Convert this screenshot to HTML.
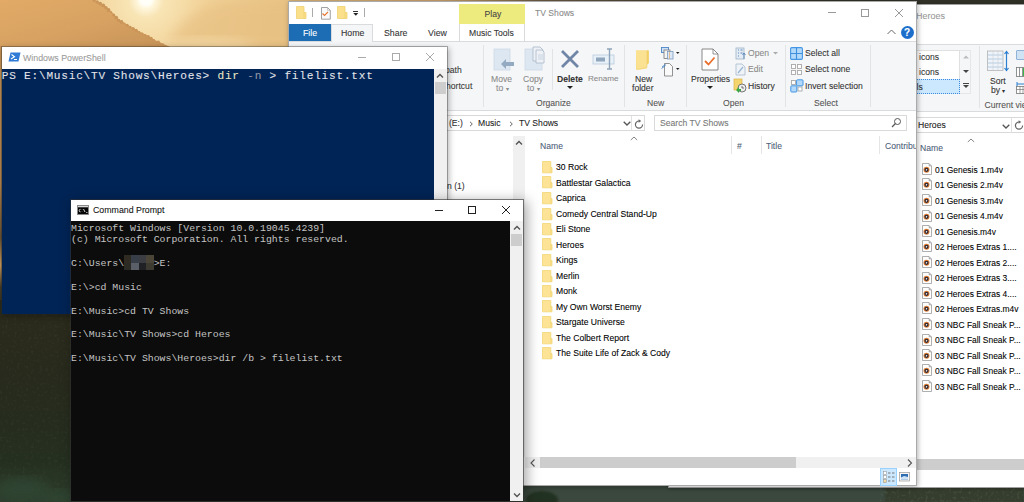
<!DOCTYPE html>
<html><head><meta charset="utf-8">
<style>
*{margin:0;padding:0;box-sizing:border-box}
html,body{width:1024px;height:502px;overflow:hidden;position:relative;background:#2f3a2a;font-family:"Liberation Sans",sans-serif}
.a{position:absolute}
.t{position:absolute;white-space:nowrap;font-size:8.6px;line-height:10px;color:#000;-webkit-text-stroke:0.08px currentColor}
.g{color:#8a8a8a}
.mono{font-family:"Liberation Mono",monospace}
</style></head><body>

<!-- ===== wallpaper ===== -->
<svg class="a" style="left:0;top:0" width="1024" height="502">
  <defs>
    <radialGradient id="sun" cx="146" cy="0" r="150" gradientUnits="userSpaceOnUse"><stop offset="0" stop-color="#fffef2"/><stop offset="0.05" stop-color="#fff8e0"/><stop offset="0.12" stop-color="#f8e4b4"/><stop offset="0.4" stop-color="#f2d298"/><stop offset="1" stop-color="#e8c386"/></radialGradient>
    <linearGradient id="hill" x1="0" y1="0" x2="1" y2="1"><stop offset="0" stop-color="#e2aa66"/><stop offset="0.5" stop-color="#d7a262"/><stop offset="1" stop-color="#c69257"/></linearGradient>
    <linearGradient id="forest" x1="0" y1="0" x2="0" y2="1"><stop offset="0" stop-color="#2c2b1c"/><stop offset="0.4" stop-color="#272a1c"/><stop offset="0.8" stop-color="#252f20"/><stop offset="1" stop-color="#2d3d2c"/></linearGradient>
    <filter id="bl"><feGaussianBlur stdDeviation="6"/></filter>
    <filter id="bl2"><feGaussianBlur stdDeviation="1"/></filter>
    <filter id="noise" x="0" y="0" width="100%" height="100%"><feTurbulence type="fractalNoise" baseFrequency="0.35" numOctaves="2" seed="4"/><feColorMatrix type="matrix" values="0 0 0 0 0.35  0 0 0 0 0.45  0 0 0 0 0.3  0 0 0 1.6 -0.85"/></filter>
  </defs>
  <rect x="0" y="0" width="1024" height="200" fill="url(#sun)"/>
  <path d="M165 50 C175 25 195 8 225 2 C250 0 270 0 300 0 L300 50 Z" fill="#e6be80" opacity="0.6" filter="url(#bl)"/>
  <path d="M130 50 C160 38 200 34 240 40 L260 50 Z" fill="#f3dcaa" opacity="0.6" filter="url(#bl)"/>
  <circle cx="146" cy="-1" r="7.5" fill="#fffef8" filter="url(#bl2)"/>
  <path d="M0 0 H95 L104 5 L112 12 L119.5 20 L128 25 L137 30 L146 35 L154.7 40 L168 46 L172 48 L0 48 Z" fill="url(#hill)"/>
  <g><circle cx="94.2" cy="0.3" r="1.6" fill="#c99558"/><circle cx="97.2" cy="2.0" r="1.7" fill="#c99558"/><circle cx="100.2" cy="3.6" r="1.8" fill="#c99558"/><circle cx="103.2" cy="5.3" r="1.9" fill="#c99558"/><circle cx="105.9" cy="7.6" r="1.7" fill="#c99558"/><circle cx="108.5" cy="10.0" r="1.9" fill="#c99558"/><circle cx="111.2" cy="12.3" r="1.0" fill="#c99558"/><circle cx="113.7" cy="15.0" r="1.5" fill="#c99558"/><circle cx="116.2" cy="17.6" r="1.9" fill="#c99558"/><circle cx="118.7" cy="20.3" r="1.6" fill="#c99558"/><circle cx="121.5" cy="22.0" r="1.9" fill="#c99558"/><circle cx="124.4" cy="23.6" r="1.1" fill="#c99558"/><circle cx="127.2" cy="25.3" r="1.5" fill="#c99558"/><circle cx="130.2" cy="27.0" r="1.2" fill="#c99558"/><circle cx="133.2" cy="28.6" r="1.5" fill="#c99558"/><circle cx="136.2" cy="30.3" r="1.6" fill="#c99558"/><circle cx="139.2" cy="32.0" r="1.0" fill="#c99558"/><circle cx="142.2" cy="33.6" r="1.2" fill="#c99558"/><circle cx="145.2" cy="35.3" r="1.3" fill="#c99558"/><circle cx="148.1" cy="37.0" r="1.9" fill="#c99558"/><circle cx="151.0" cy="38.6" r="1.8" fill="#c99558"/><circle cx="153.9" cy="40.3" r="1.2" fill="#c99558"/><circle cx="158.3" cy="42.3" r="1.8" fill="#c99558"/><circle cx="162.8" cy="44.3" r="1.1" fill="#c99558"/></g>
  
  <defs><linearGradient id="leftcol" x1="0" y1="46" x2="0" y2="320" gradientUnits="userSpaceOnUse"><stop offset="0" stop-color="#c99558"/><stop offset="0.5" stop-color="#b88850"/><stop offset="0.7" stop-color="#6a5436"/><stop offset="0.8" stop-color="#d0a060"/><stop offset="0.88" stop-color="#4a3e28"/><stop offset="1" stop-color="#2c2a1c"/></linearGradient></defs>
  <rect x="0" y="46" width="3" height="270" fill="url(#leftcol)"/>
  <rect x="0" y="300" width="1024" height="202" fill="url(#forest)"/>
  <rect x="0" y="314" width="72" height="188" filter="url(#noise)" opacity="0.12"/>
  <rect x="520" y="484" width="504" height="18" fill="#3a483d"/>
  <ellipse cx="542" cy="500" rx="16" ry="9" fill="#243020" filter="url(#bl2)"/>
  <ellipse cx="22" cy="490" rx="26" ry="12" fill="#2f4530" filter="url(#bl)"/>
  <ellipse cx="58" cy="498" rx="18" ry="8" fill="#2e4530" filter="url(#bl)"/>
  <rect x="885" y="484" width="139" height="18" fill="#363d2e" filter="url(#bl2)"/>
  <rect x="880" y="486" width="144" height="16" filter="url(#noise)" opacity="0.3"/>
  <defs><linearGradient id="topstrip" x1="280" y1="0" x2="1024" y2="0" gradientUnits="userSpaceOnUse"><stop offset="0" stop-color="#dcb576"/><stop offset="0.22" stop-color="#c9a068"/><stop offset="0.35" stop-color="#6a5a42"/><stop offset="0.6" stop-color="#34322a"/><stop offset="1" stop-color="#2e2f25"/></linearGradient></defs>
  <rect x="289" y="0" width="735" height="6" fill="url(#topstrip)"/>
</svg>

<!-- ===== Heroes explorer (back right) ===== -->
<div class="a" style="left:668px;top:4px;width:362px;height:484px;background:#fff;border:1px solid #a0a0a0;box-shadow:0 1px 3px rgba(0,0,0,.25)"></div>
<div class="t" style="left:916px;top:10.5px;color:#999;font-size:9px">Heroes</div>
<div class="a" style="left:906px;top:44px;width:124px;height:68px;background:#f5f6f7;border-top:1px solid #dadbdc;border-bottom:1px solid #dadbdc"></div>
<div class="a" style="left:900px;top:50px;width:60px;height:44px;background:#fff;border:1px solid #e0e0e0"></div>
<div class="a" style="left:960px;top:50px;width:11px;height:44px;background:#f5f6f7;border:1px solid #e6e6e6;border-left:none"></div>
<div class="t" style="left:919px;top:52px;color:#333">icons</div>
<div class="t" style="left:919px;top:67px;color:#333">icons</div>
<div class="a" style="left:905px;top:79px;width:55px;height:15px;background:#cce8ff;border:1px dotted #3c8be0"></div>
<div class="t" style="left:916.5px;top:82px;color:#333">ls</div>
<svg class="a" style="left:963px;top:55px" width="7" height="4"><path d="M0 3.5h6l-3-3z" fill="#bbb"/></svg>
<svg class="a" style="left:963px;top:70px" width="7" height="4"><path d="M0 0h6l-3 3z" fill="#444"/></svg>
<div class="a" style="left:963px;top:83px;width:6px;height:1px;background:#444"></div>
<svg class="a" style="left:963px;top:85px" width="7" height="4"><path d="M0 0h6l-3 3z" fill="#444"/></svg>
<div class="a" style="left:979px;top:46px;width:1px;height:62px;background:#e2e3e4"></div>
<svg class="a" style="left:987px;top:50px" width="24" height="22" viewBox="0 0 24 22"><rect x="0.5" y="1" width="15.5" height="19.5" fill="#eef4fa" stroke="#aaa" stroke-width="0.7"/><path d="M1 5h15M1 9h15M1 13h15M1 17h15" stroke="#b7cde3" stroke-width="1.2"/><path d="M6 1v19.5M11 1v19.5" stroke="#ccc" stroke-width="0.5"/><path d="M19.5 2v18M17.5 4l2-2.5 2 2.5M17.5 18l2 2.5 2-2.5" fill="none" stroke="#2d7fd1" stroke-width="1.2"/></svg>
<div class="t" style="left:990px;top:76px;color:#333">Sort</div>
<div class="t" style="left:991px;top:85px;color:#333">by <span style="font-size:6px">&#9662;</span></div>
<div class="a" style="left:1016px;top:50px;width:10px;height:10px;background:#cfe3f5;border:1px solid #8fb4d8;border-radius:1px"></div>
<svg class="a" style="left:1016px;top:67px" width="10" height="10"><rect x="0.5" y="0.5" width="10" height="9" fill="#fff" stroke="#777" stroke-width="0.8"/><path d="M3.5 0.5v9M6.5 0.5v9" stroke="#777" stroke-width="0.8"/><rect x="7" y="1" width="3" height="8" fill="#39b54a"/></svg>
<svg class="a" style="left:1016px;top:81px" width="10" height="13"><path d="M1 1v4M1 3h8" stroke="#2d7fd1" stroke-width="1"/><rect x="0.5" y="5.5" width="10" height="7" fill="#fff" stroke="#777" stroke-width="0.8"/><path d="M0.5 8.5h10M4 5.5v7M7 5.5v7" stroke="#777" stroke-width="0.7"/></svg>
<div class="t" style="left:984.5px;top:100px;color:#555">Current view</div>
<div class="a" style="left:900px;top:117px;width:130px;height:16px;border:1px solid #d9d9d9;background:#fff"></div>
<div class="t" style="left:918px;top:120px;color:#222">Heroes</div>
<svg class="a" style="left:1002px;top:123.5px" width="8" height="5"><path d="M0.7 0.7l3.3 3.3 3.3-3.3" fill="none" stroke="#555" stroke-width="1.3"/></svg>
<div class="a" style="left:1011px;top:118px;width:1px;height:15px;background:#e0e0e0"></div>
<svg class="a" style="left:1013.5px;top:120px" width="10" height="10" viewBox="0 0 10 10"><path d="M8.6 5.6A3.6 3.6 0 1 1 5 2" fill="none" stroke="#666" stroke-width="1.2"/><path d="M4.6 0.2L7.3 2 4.6 3.8z" fill="#666"/></svg>
<div class="t" style="left:920px;top:143px;color:#4c607a">Name</div>
<svg class="a" style="left:966.5px;top:137.5px" width="8" height="5"><path d="M0.8 4l3.2-3 3.2 3" fill="none" stroke="#777" stroke-width="0.9"/></svg>
<svg class="a" style="left:921.5px;top:163px" width="10" height="12" viewBox="0 0 10 12"><path d="M0.5 0.5h6.5l2.5 2.5v8.5h-9z" fill="#fff" stroke="#9a9a9a" stroke-width="0.8"/><path d="M7 0.5v2.5h2.5" fill="#bbb" stroke="#999" stroke-width="0.5"/><circle cx="4.5" cy="6.8" r="3" fill="#e08038"/><circle cx="4.5" cy="6.8" r="2.1" fill="#2c2630"/><path d="M3.9 5.7l1.6 1.1-1.6 1.1z" fill="#fff"/></svg>
<div class="t" style="left:935px;top:164.5px;font-size:8.45px">01 Genesis 1.m4v</div>
<svg class="a" style="left:921.5px;top:178px" width="10" height="12" viewBox="0 0 10 12"><path d="M0.5 0.5h6.5l2.5 2.5v8.5h-9z" fill="#fff" stroke="#9a9a9a" stroke-width="0.8"/><path d="M7 0.5v2.5h2.5" fill="#bbb" stroke="#999" stroke-width="0.5"/><circle cx="4.5" cy="6.8" r="3" fill="#e08038"/><circle cx="4.5" cy="6.8" r="2.1" fill="#2c2630"/><path d="M3.9 5.7l1.6 1.1-1.6 1.1z" fill="#fff"/></svg>
<div class="t" style="left:935px;top:180.0px;font-size:8.45px">01 Genesis 2.m4v</div>
<svg class="a" style="left:921.5px;top:194px" width="10" height="12" viewBox="0 0 10 12"><path d="M0.5 0.5h6.5l2.5 2.5v8.5h-9z" fill="#fff" stroke="#9a9a9a" stroke-width="0.8"/><path d="M7 0.5v2.5h2.5" fill="#bbb" stroke="#999" stroke-width="0.5"/><circle cx="4.5" cy="6.8" r="3" fill="#e08038"/><circle cx="4.5" cy="6.8" r="2.1" fill="#2c2630"/><path d="M3.9 5.7l1.6 1.1-1.6 1.1z" fill="#fff"/></svg>
<div class="t" style="left:935px;top:195.5px;font-size:8.45px">01 Genesis 3.m4v</div>
<svg class="a" style="left:921.5px;top:210px" width="10" height="12" viewBox="0 0 10 12"><path d="M0.5 0.5h6.5l2.5 2.5v8.5h-9z" fill="#fff" stroke="#9a9a9a" stroke-width="0.8"/><path d="M7 0.5v2.5h2.5" fill="#bbb" stroke="#999" stroke-width="0.5"/><circle cx="4.5" cy="6.8" r="3" fill="#e08038"/><circle cx="4.5" cy="6.8" r="2.1" fill="#2c2630"/><path d="M3.9 5.7l1.6 1.1-1.6 1.1z" fill="#fff"/></svg>
<div class="t" style="left:935px;top:211.0px;font-size:8.45px">01 Genesis 4.m4v</div>
<svg class="a" style="left:921.5px;top:225px" width="10" height="12" viewBox="0 0 10 12"><path d="M0.5 0.5h6.5l2.5 2.5v8.5h-9z" fill="#fff" stroke="#9a9a9a" stroke-width="0.8"/><path d="M7 0.5v2.5h2.5" fill="#bbb" stroke="#999" stroke-width="0.5"/><circle cx="4.5" cy="6.8" r="3" fill="#e08038"/><circle cx="4.5" cy="6.8" r="2.1" fill="#2c2630"/><path d="M3.9 5.7l1.6 1.1-1.6 1.1z" fill="#fff"/></svg>
<div class="t" style="left:935px;top:226.5px;font-size:8.45px">01 Genesis.m4v</div>
<svg class="a" style="left:921.5px;top:240px" width="10" height="12" viewBox="0 0 10 12"><path d="M0.5 0.5h6.5l2.5 2.5v8.5h-9z" fill="#fff" stroke="#9a9a9a" stroke-width="0.8"/><path d="M7 0.5v2.5h2.5" fill="#bbb" stroke="#999" stroke-width="0.5"/><circle cx="4.5" cy="6.8" r="3" fill="#e08038"/><circle cx="4.5" cy="6.8" r="2.1" fill="#2c2630"/><path d="M3.9 5.7l1.6 1.1-1.6 1.1z" fill="#fff"/></svg>
<div class="t" style="left:935px;top:242.0px;font-size:8.45px">02 Heroes Extras 1....</div>
<svg class="a" style="left:921.5px;top:256px" width="10" height="12" viewBox="0 0 10 12"><path d="M0.5 0.5h6.5l2.5 2.5v8.5h-9z" fill="#fff" stroke="#9a9a9a" stroke-width="0.8"/><path d="M7 0.5v2.5h2.5" fill="#bbb" stroke="#999" stroke-width="0.5"/><circle cx="4.5" cy="6.8" r="3" fill="#e08038"/><circle cx="4.5" cy="6.8" r="2.1" fill="#2c2630"/><path d="M3.9 5.7l1.6 1.1-1.6 1.1z" fill="#fff"/></svg>
<div class="t" style="left:935px;top:257.5px;font-size:8.45px">02 Heroes Extras 2....</div>
<svg class="a" style="left:921.5px;top:272px" width="10" height="12" viewBox="0 0 10 12"><path d="M0.5 0.5h6.5l2.5 2.5v8.5h-9z" fill="#fff" stroke="#9a9a9a" stroke-width="0.8"/><path d="M7 0.5v2.5h2.5" fill="#bbb" stroke="#999" stroke-width="0.5"/><circle cx="4.5" cy="6.8" r="3" fill="#e08038"/><circle cx="4.5" cy="6.8" r="2.1" fill="#2c2630"/><path d="M3.9 5.7l1.6 1.1-1.6 1.1z" fill="#fff"/></svg>
<div class="t" style="left:935px;top:273.0px;font-size:8.45px">02 Heroes Extras 3....</div>
<svg class="a" style="left:921.5px;top:287px" width="10" height="12" viewBox="0 0 10 12"><path d="M0.5 0.5h6.5l2.5 2.5v8.5h-9z" fill="#fff" stroke="#9a9a9a" stroke-width="0.8"/><path d="M7 0.5v2.5h2.5" fill="#bbb" stroke="#999" stroke-width="0.5"/><circle cx="4.5" cy="6.8" r="3" fill="#e08038"/><circle cx="4.5" cy="6.8" r="2.1" fill="#2c2630"/><path d="M3.9 5.7l1.6 1.1-1.6 1.1z" fill="#fff"/></svg>
<div class="t" style="left:935px;top:288.5px;font-size:8.45px">02 Heroes Extras 4....</div>
<svg class="a" style="left:921.5px;top:302px" width="10" height="12" viewBox="0 0 10 12"><path d="M0.5 0.5h6.5l2.5 2.5v8.5h-9z" fill="#fff" stroke="#9a9a9a" stroke-width="0.8"/><path d="M7 0.5v2.5h2.5" fill="#bbb" stroke="#999" stroke-width="0.5"/><circle cx="4.5" cy="6.8" r="3" fill="#e08038"/><circle cx="4.5" cy="6.8" r="2.1" fill="#2c2630"/><path d="M3.9 5.7l1.6 1.1-1.6 1.1z" fill="#fff"/></svg>
<div class="t" style="left:935px;top:304.0px;font-size:8.45px">02 Heroes Extras.m4v</div>
<svg class="a" style="left:921.5px;top:318px" width="10" height="12" viewBox="0 0 10 12"><path d="M0.5 0.5h6.5l2.5 2.5v8.5h-9z" fill="#fff" stroke="#9a9a9a" stroke-width="0.8"/><path d="M7 0.5v2.5h2.5" fill="#bbb" stroke="#999" stroke-width="0.5"/><circle cx="4.5" cy="6.8" r="3" fill="#e08038"/><circle cx="4.5" cy="6.8" r="2.1" fill="#2c2630"/><path d="M3.9 5.7l1.6 1.1-1.6 1.1z" fill="#fff"/></svg>
<div class="t" style="left:935px;top:319.5px;font-size:8.45px">03 NBC Fall Sneak P...</div>
<svg class="a" style="left:921.5px;top:334px" width="10" height="12" viewBox="0 0 10 12"><path d="M0.5 0.5h6.5l2.5 2.5v8.5h-9z" fill="#fff" stroke="#9a9a9a" stroke-width="0.8"/><path d="M7 0.5v2.5h2.5" fill="#bbb" stroke="#999" stroke-width="0.5"/><circle cx="4.5" cy="6.8" r="3" fill="#e08038"/><circle cx="4.5" cy="6.8" r="2.1" fill="#2c2630"/><path d="M3.9 5.7l1.6 1.1-1.6 1.1z" fill="#fff"/></svg>
<div class="t" style="left:935px;top:335.0px;font-size:8.45px">03 NBC Fall Sneak P...</div>
<svg class="a" style="left:921.5px;top:349px" width="10" height="12" viewBox="0 0 10 12"><path d="M0.5 0.5h6.5l2.5 2.5v8.5h-9z" fill="#fff" stroke="#9a9a9a" stroke-width="0.8"/><path d="M7 0.5v2.5h2.5" fill="#bbb" stroke="#999" stroke-width="0.5"/><circle cx="4.5" cy="6.8" r="3" fill="#e08038"/><circle cx="4.5" cy="6.8" r="2.1" fill="#2c2630"/><path d="M3.9 5.7l1.6 1.1-1.6 1.1z" fill="#fff"/></svg>
<div class="t" style="left:935px;top:350.5px;font-size:8.45px">03 NBC Fall Sneak P...</div>
<svg class="a" style="left:921.5px;top:364px" width="10" height="12" viewBox="0 0 10 12"><path d="M0.5 0.5h6.5l2.5 2.5v8.5h-9z" fill="#fff" stroke="#9a9a9a" stroke-width="0.8"/><path d="M7 0.5v2.5h2.5" fill="#bbb" stroke="#999" stroke-width="0.5"/><circle cx="4.5" cy="6.8" r="3" fill="#e08038"/><circle cx="4.5" cy="6.8" r="2.1" fill="#2c2630"/><path d="M3.9 5.7l1.6 1.1-1.6 1.1z" fill="#fff"/></svg>
<div class="t" style="left:935px;top:366.0px;font-size:8.45px">03 NBC Fall Sneak P...</div>
<svg class="a" style="left:921.5px;top:380px" width="10" height="12" viewBox="0 0 10 12"><path d="M0.5 0.5h6.5l2.5 2.5v8.5h-9z" fill="#fff" stroke="#9a9a9a" stroke-width="0.8"/><path d="M7 0.5v2.5h2.5" fill="#bbb" stroke="#999" stroke-width="0.5"/><circle cx="4.5" cy="6.8" r="3" fill="#e08038"/><circle cx="4.5" cy="6.8" r="2.1" fill="#2c2630"/><path d="M3.9 5.7l1.6 1.1-1.6 1.1z" fill="#fff"/></svg>
<div class="t" style="left:935px;top:381.5px;font-size:8.45px">03 NBC Fall Sneak P...</div>
<div class="a" style="left:916px;top:459px;width:108px;height:11px;background:#cdcdcd"></div>

<!-- ===== main explorer ===== -->
<div class="a" style="left:288px;top:1px;width:629px;height:485px;background:#fff;border:1px solid #aaaaaa;box-shadow:1px 1px 5px rgba(0,0,0,.3)"></div>
<!-- QAT -->
<svg class="a" style="left:296px;top:6px" width="11" height="13" viewBox="0 0 11 13"><path d="M0.5 0.5h7.5v6h2v6h-9.5z" fill="#fbe08c" stroke="#f0d070" stroke-width="0.8"/><path d="M8 6.5v6" stroke="#efcf6a" stroke-width="0.7"/></svg>
<div class="a" style="left:312px;top:8px;width:1px;height:9px;background:#aaa"></div>
<svg class="a" style="left:320.5px;top:7px" width="10" height="13" viewBox="0 0 10 13"><path d="M0.5 0.5h6l2.8 2.8v8.9h-8.8z" fill="#fafafa" stroke="#8a8a8a" stroke-width="0.8"/><path d="M6.5 0.5v2.8h2.8" fill="none" stroke="#aaa" stroke-width="0.6"/><path d="M1.5 6.5l2 2 3.5-3.5" fill="none" stroke="#e8772e" stroke-width="1.1"/></svg>
<svg class="a" style="left:337px;top:6px" width="11" height="13" viewBox="0 0 11 13"><path d="M0.5 0.5h7.5v6h2v6h-9.5z" fill="#fbe08c" stroke="#f0d070" stroke-width="0.8"/><path d="M8 6.5v6" stroke="#efcf6a" stroke-width="0.7"/></svg>
<div class="a" style="left:353px;top:11px;width:5px;height:1.2px;background:#333"></div>
<svg class="a" style="left:353px;top:13px" width="6" height="4"><path d="M0.3 0h5l-2.5 2.7z" fill="#222"/></svg>
<div class="a" style="left:364px;top:8px;width:1px;height:9px;background:#aaa"></div>
<div class="a" style="left:459px;top:4px;width:66px;height:20px;background:#eeeb7e"></div>
<div class="t" style="left:484.5px;top:9px;color:#444;font-size:8.6px">Play</div>
<div class="t" style="left:535px;top:8px;color:#8a8a8a;font-size:8.6px">TV Shows</div>
<!-- window buttons -->
<div class="a" style="left:828px;top:12px;width:8px;height:1px;background:#999"></div>
<div class="a" style="left:861px;top:9px;width:8px;height:8px;border:1px solid #999"></div>
<svg class="a" style="left:894px;top:8px" width="10" height="10"><path d="M1 1l8 8M9 1l-8 8" stroke="#999" stroke-width="1"/></svg>
<!-- tabs -->
<div class="a" style="left:289px;top:24px;width:42px;height:17px;background:#1c6db3"></div>
<div class="t" style="left:303px;top:28px;color:#fff;font-size:8.8px">File</div>
<div class="a" style="left:331px;top:24px;width:42px;height:18px;background:#f5f6f7;border:1px solid #dadbdc;border-bottom:none"></div>
<div class="t" style="left:341px;top:28px;font-size:8.8px;color:#333">Home</div>
<div class="t" style="left:384px;top:28px;font-size:8.8px;color:#333">Share</div>
<div class="t" style="left:428px;top:28px;font-size:8.8px;color:#333">View</div>
<div class="a" style="left:459px;top:24px;width:66px;height:17px;border-left:1px solid #dadbdc;border-right:1px solid #dadbdc"></div>
<div class="t" style="left:469px;top:28px;font-size:8.6px;color:#333">Music Tools</div>
<svg class="a" style="left:887px;top:29px" width="9" height="6"><path d="M0.5 5l4-4 4 4" fill="none" stroke="#666" stroke-width="1"/></svg>
<div class="a" style="left:901px;top:26px;width:13px;height:13px;border-radius:50%;background:#1c6ecb"></div>
<div class="t" style="left:904px;top:27px;color:#fff;font-weight:bold;font-size:10px;line-height:11px">?</div>
<!-- ribbon -->
<div class="a" style="left:289px;top:41px;width:627px;height:70px;background:#f5f6f7;border-top:1px solid #dadbdc;border-bottom:1px solid #dadbdc"></div>
<div class="a" style="left:332px;top:41px;width:40px;height:1px;background:#f5f6f7"></div>
<div class="t" style="left:445px;top:65px;color:#3a3a3a">path</div>
<div class="t" style="left:446px;top:81px;color:#3a3a3a">hortcut</div>
<div class="a" style="left:483px;top:45px;width:1px;height:62px;background:#e2e3e4"></div>
<!-- Move to -->
<svg class="a" style="left:493px;top:48px" width="22" height="23" viewBox="0 0 22 23"><rect x="1" y="1" width="16" height="21" fill="#dde7f2" stroke="#cdd9e6" stroke-width="0.8"/><path d="M8 16l5-5v3h8v4h-8v3z" fill="#93aac2"/></svg>
<div class="t g" style="left:491px;top:74px">Move</div>
<div class="t g" style="left:496px;top:83px">to <span style="font-size:6px">&#9662;</span></div>
<!-- Copy to -->
<svg class="a" style="left:524px;top:46px" width="22" height="25" viewBox="0 0 22 25"><rect x="1" y="3" width="17" height="21" fill="#dde7f2" stroke="#cdd9e6" stroke-width="0.8"/><path d="M9 1h7l3 3v11h-10z" fill="#eef2f7" stroke="#a9b8c8" stroke-width="0.8"/><path d="M12 4h6l2 2v11h-8z" fill="#eef2f7" stroke="#a9b8c8" stroke-width="0.8"/><path d="M14 9h5M14 11h5M14 13h5" stroke="#b8c6d4" stroke-width="0.7"/></svg>
<div class="t g" style="left:523px;top:74px">Copy</div>
<div class="t g" style="left:527px;top:83px">to <span style="font-size:6px">&#9662;</span></div>
<div class="a" style="left:552px;top:49px;width:1px;height:41px;background:#e2e3e4"></div>
<!-- Delete -->
<svg class="a" style="left:560px;top:49px" width="21" height="20"><path d="M2 2l16 16M18 2l-16 16" stroke="#7086a6" stroke-width="2.8"/></svg>
<div class="t" style="left:557px;top:74px;font-weight:bold;color:#333">Delete</div>
<svg class="a" style="left:567px;top:86px" width="7" height="4"><path d="M0 0h6l-3 3z" fill="#222"/></svg>
<!-- Rename -->
<svg class="a" style="left:592px;top:48px" width="24" height="22" viewBox="0 0 24 22"><rect x="1" y="7" width="21" height="9" fill="#e8f0f8" stroke="#b8cadb" stroke-width="0.8"/><rect x="4" y="9.5" width="9" height="4" fill="#90a6bd"/><path d="M17.5 1v20M15 1h5M15 21h5" stroke="#8ea4bb" stroke-width="1.4"/></svg>
<div class="t g" style="left:588px;top:74px;font-size:8.1px">Rename</div>
<div class="t g" style="left:536px;top:98px;color:#555">Organize</div>
<div class="a" style="left:624px;top:45px;width:1px;height:62px;background:#e2e3e4"></div>
<!-- New -->
<svg class="a" style="left:635px;top:49px" width="15" height="22" viewBox="0 0 15 22"><path d="M1 1.5h12.5v13l-2 1v-0.5h-9.5v5.5l-1-0.5z" fill="#f9dc80"/><path d="M1 1.5h11v18l-10 1.5v0z" fill="#fbe292"/><path d="M12 1.5h1.8v12.5l-1.8 1.5z" fill="#f2cf62"/><path d="M1.5 20.5l10.5-2v-17" fill="none" stroke="#efd070" stroke-width="0.6"/></svg>
<div class="t" style="left:635px;top:74px;color:#333">New</div>
<div class="t" style="left:632px;top:83px;color:#333">folder</div>
<svg class="a" style="left:661px;top:47px" width="19" height="13" viewBox="0 0 19 13"><rect x="0.5" y="0.5" width="7" height="5" fill="#cfe2f5" stroke="#4a86c8" stroke-width="0.9"/><rect x="3" y="3" width="6" height="8.5" fill="#f4f4f4" stroke="#777" stroke-width="0.8"/><rect x="6.5" y="4.5" width="5.5" height="7.5" fill="#dce9f5" stroke="#7a9cc0" stroke-width="0.8"/><path d="M8.5 5v7" stroke="#e09a50" stroke-width="0.6"/><path d="M15 5h3.5l-1.75 2z" fill="#222"/></svg>
<svg class="a" style="left:661px;top:62px" width="19" height="15" viewBox="0 0 19 15"><path d="M3.5 1.5h5l3 3v9.5h-8z" fill="#fafafa" stroke="#777" stroke-width="0.8"/><path d="M0.5 6.5l4-3M1 5l3.5-2.5" stroke="#4a86c8" stroke-width="0.9"/><path d="M15 6h3.5l-1.75 2z" fill="#222"/></svg>
<div class="t" style="left:647px;top:98px;color:#555">New</div>
<div class="a" style="left:686px;top:45px;width:1px;height:62px;background:#e2e3e4"></div>
<!-- Properties -->
<svg class="a" style="left:701px;top:48px" width="18" height="23" viewBox="0 0 18 23"><path d="M1 1h11l5 5v16h-16z" fill="#fff" stroke="#7a7a7a" stroke-width="0.9"/><path d="M12 1v5h5" fill="none" stroke="#7a7a7a" stroke-width="0.8"/><path d="M4 13l3.5 3.5 6-7" fill="none" stroke="#e8702f" stroke-width="1.8"/></svg>
<div class="t" style="left:691px;top:74px;color:#333">Properties</div>
<svg class="a" style="left:707px;top:86px" width="7" height="4"><path d="M0 0h6l-3 3z" fill="#222"/></svg>
<svg class="a" style="left:735px;top:47px" width="12" height="13" viewBox="0 0 12 13"><rect x="1" y="1" width="8" height="11" fill="#e3ecf5" stroke="#9fb3c8" stroke-width="0.8"/><path d="M3 3h1M3 6h1M3 9h1M5.5 3h2M5.5 6h2" stroke="#5b86b8" stroke-width="1"/><path d="M9 6v6M7.5 8l1.5-2 1.5 2" stroke="#5b86b8" stroke-width="0.9" fill="none"/></svg>
<div class="t g" style="left:748px;top:48px">Open</div><svg class="a" style="left:773px;top:52px" width="5" height="3"><path d="M0 0h5l-2.5 2.5z" fill="#aaa"/></svg>
<svg class="a" style="left:735px;top:63px" width="12" height="13" viewBox="0 0 12 13"><path d="M1 1h6l3 3v8h-9z" fill="#eef3f8" stroke="#a8b9cb" stroke-width="0.8"/><path d="M3 10l5-6" stroke="#9bb4cf" stroke-width="1.2"/></svg>
<div class="t g" style="left:748px;top:64px">Edit</div>
<svg class="a" style="left:733px;top:78px" width="14" height="15" viewBox="0 0 14 15"><rect x="1" y="1" width="8" height="11" fill="#f3d46d" stroke="#d9b548" stroke-width="0.7"/><circle cx="9" cy="10" r="4" fill="#eee" stroke="#666" stroke-width="0.9"/><path d="M9 8v2h2" stroke="#555" stroke-width="0.8" fill="none"/><path d="M3 12l3-3v2h2v2h-2v2z" fill="#3aa845"/></svg>
<div class="t" style="left:748px;top:81px;color:#333">History</div>
<div class="t" style="left:723px;top:98px;color:#555">Open</div>
<div class="a" style="left:785px;top:45px;width:1px;height:62px;background:#e2e3e4"></div>
<!-- Select -->
<svg class="a" style="left:790px;top:47px" width="13" height="13" viewBox="0 0 13 13"><rect x="0.6" y="0.6" width="11.8" height="11.8" rx="1.2" fill="#b3d9fa" stroke="#4596e4" stroke-width="1.1"/><path d="M6.5 0.6v11.8M0.6 6.5h11.8" stroke="#3f8fdf" stroke-width="1.1"/></svg>
<div class="t" style="left:805px;top:48px;color:#333">Select all</div>
<svg class="a" style="left:790px;top:63px" width="13" height="13" viewBox="0 0 13 13"><rect x="1.5" y="1.5" width="4" height="4" fill="#fff" stroke="#a8a8a8" stroke-width="0.9"/><rect x="7.5" y="1.5" width="4" height="4" fill="#fff" stroke="#a8a8a8" stroke-width="0.9"/><rect x="1.5" y="7.5" width="4" height="4" fill="#fff" stroke="#a8a8a8" stroke-width="0.9"/><rect x="7.5" y="7.5" width="4" height="4" fill="#fff" stroke="#a8a8a8" stroke-width="0.9"/></svg>
<div class="t" style="left:805px;top:64px;color:#333">Select none</div>
<svg class="a" style="left:790px;top:79px" width="14" height="14" viewBox="0 0 14 14"><rect x="1.5" y="1.5" width="4" height="4" fill="#fff" stroke="#a8a8a8" stroke-width="0.9"/><rect x="8" y="8" width="4" height="4" fill="#fff" stroke="#a8a8a8" stroke-width="0.9"/><rect x="6.6" y="0.8" width="6.4" height="6" rx="0.8" fill="#b3d9fa" stroke="#4596e4" stroke-width="1"/><rect x="0.8" y="6.8" width="6" height="6.2" rx="0.8" fill="#b3d9fa" stroke="#4596e4" stroke-width="1"/></svg>
<div class="t" style="left:805px;top:81px;color:#333">Invert selection</div>
<div class="t" style="left:814px;top:98px;color:#555">Select</div>
<div class="a" style="left:870px;top:45px;width:1px;height:62px;background:#e2e3e4"></div>
<!-- address row -->
<div class="a" style="left:440px;top:115px;width:205px;height:16px;border:1px solid #d9d9d9;background:#fff"></div>
<div class="t" style="left:449px;top:118px;color:#333">(E:)</div>
<svg class="a" style="left:469px;top:121px" width="5" height="6"><path d="M1 0.8l2.3 2.2-2.3 2.2" fill="none" stroke="#666" stroke-width="1"/></svg>
<div class="t" style="left:478px;top:118px;color:#222">Music</div>
<svg class="a" style="left:509px;top:121px" width="5" height="6"><path d="M1 0.8l2.3 2.2-2.3 2.2" fill="none" stroke="#666" stroke-width="1"/></svg>
<div class="t" style="left:519px;top:118px;color:#222">TV Shows</div>
<svg class="a" style="left:622.5px;top:121px" width="8" height="5"><path d="M0.7 0.7l3.3 3.3 3.3-3.3" fill="none" stroke="#555" stroke-width="1.3"/></svg>
<div class="a" style="left:631px;top:116px;width:1px;height:15px;background:#e0e0e0"></div>
<svg class="a" style="left:633.5px;top:118.5px" width="10" height="10" viewBox="0 0 10 10"><path d="M8.6 5.6A3.6 3.6 0 1 1 5 2" fill="none" stroke="#666" stroke-width="1.2"/><path d="M4.6 0.2L7.3 2 4.6 3.8z" fill="#666"/></svg>
<div class="a" style="left:654px;top:115px;width:253px;height:16px;border:1px solid #d9d9d9;background:#fff"></div>
<div class="t" style="left:660px;top:118px;color:#777">Search TV Shows</div>
<svg class="a" style="left:891px;top:117px" width="11" height="11"><circle cx="6.5" cy="4.5" r="3" fill="none" stroke="#555" stroke-width="1"/><path d="M4.5 6.5l-3.5 3.5" stroke="#555" stroke-width="1.3"/></svg>
<!-- nav pane -->
<div class="t" style="left:447px;top:181px;color:#333">n (1)</div>
<div class="a" style="left:513px;top:136px;width:12px;height:321px;background:#f0f0f0"></div>
<svg class="a" style="left:515px;top:140px" width="8" height="6"><path d="M1 4.5l3-3 3 3" fill="none" stroke="#505050" stroke-width="1.3"/></svg>
<!-- headers -->
<div class="t" style="left:540px;top:141px;color:#4c607a">Name</div>
<svg class="a" style="left:630px;top:135.5px" width="8" height="5"><path d="M0.8 4l3.2-3 3.2 3" fill="none" stroke="#777" stroke-width="0.9"/></svg>
<div class="a" style="left:731px;top:136px;width:1px;height:18px;background:#e5e5e5"></div>
<div class="t" style="left:737px;top:141px;color:#4c607a">#</div>
<div class="a" style="left:761px;top:136px;width:1px;height:18px;background:#e5e5e5"></div>
<div class="t" style="left:766px;top:141px;color:#4c607a">Title</div>
<div class="a" style="left:879px;top:136px;width:1px;height:18px;background:#e5e5e5"></div>
<div class="a" style="left:885px;top:141px;width:31px;height:12px;overflow:hidden"><div class="t" style="left:0;top:0;color:#4c607a">Contribu</div></div>
<svg class="a" style="left:542px;top:160.5px" width="11" height="13" viewBox="0 0 11 13"><path d="M0.5 0.5h8.3v6h1.2v5.3h-9.5z" fill="#fce395" stroke="#f3d675" stroke-width="0.8"/><path d="M8.8 6.5v5.3" stroke="#f0d26c" stroke-width="0.6"/></svg>
<div class="t" style="left:556px;top:162.0px">30 Rock</div>
<svg class="a" style="left:542px;top:175.5px" width="11" height="13" viewBox="0 0 11 13"><path d="M0.5 0.5h8.3v6h1.2v5.3h-9.5z" fill="#fce395" stroke="#f3d675" stroke-width="0.8"/><path d="M8.8 6.5v5.3" stroke="#f0d26c" stroke-width="0.6"/></svg>
<div class="t" style="left:556px;top:177.5px">Battlestar Galactica</div>
<svg class="a" style="left:542px;top:191.5px" width="11" height="13" viewBox="0 0 11 13"><path d="M0.5 0.5h8.3v6h1.2v5.3h-9.5z" fill="#fce395" stroke="#f3d675" stroke-width="0.8"/><path d="M8.8 6.5v5.3" stroke="#f0d26c" stroke-width="0.6"/></svg>
<div class="t" style="left:556px;top:193.0px">Caprica</div>
<svg class="a" style="left:542px;top:207.5px" width="11" height="13" viewBox="0 0 11 13"><path d="M0.5 0.5h8.3v6h1.2v5.3h-9.5z" fill="#fce395" stroke="#f3d675" stroke-width="0.8"/><path d="M8.8 6.5v5.3" stroke="#f0d26c" stroke-width="0.6"/></svg>
<div class="t" style="left:556px;top:208.5px">Comedy Central Stand-Up</div>
<svg class="a" style="left:542px;top:222.5px" width="11" height="13" viewBox="0 0 11 13"><path d="M0.5 0.5h8.3v6h1.2v5.3h-9.5z" fill="#fce395" stroke="#f3d675" stroke-width="0.8"/><path d="M8.8 6.5v5.3" stroke="#f0d26c" stroke-width="0.6"/></svg>
<div class="t" style="left:556px;top:224.0px">Eli Stone</div>
<svg class="a" style="left:542px;top:237.5px" width="11" height="13" viewBox="0 0 11 13"><path d="M0.5 0.5h8.3v6h1.2v5.3h-9.5z" fill="#fce395" stroke="#f3d675" stroke-width="0.8"/><path d="M8.8 6.5v5.3" stroke="#f0d26c" stroke-width="0.6"/></svg>
<div class="t" style="left:556px;top:239.5px">Heroes</div>
<svg class="a" style="left:542px;top:253.5px" width="11" height="13" viewBox="0 0 11 13"><path d="M0.5 0.5h8.3v6h1.2v5.3h-9.5z" fill="#fce395" stroke="#f3d675" stroke-width="0.8"/><path d="M8.8 6.5v5.3" stroke="#f0d26c" stroke-width="0.6"/></svg>
<div class="t" style="left:556px;top:255.0px">Kings</div>
<svg class="a" style="left:542px;top:269.5px" width="11" height="13" viewBox="0 0 11 13"><path d="M0.5 0.5h8.3v6h1.2v5.3h-9.5z" fill="#fce395" stroke="#f3d675" stroke-width="0.8"/><path d="M8.8 6.5v5.3" stroke="#f0d26c" stroke-width="0.6"/></svg>
<div class="t" style="left:556px;top:270.5px">Merlin</div>
<svg class="a" style="left:542px;top:284.5px" width="11" height="13" viewBox="0 0 11 13"><path d="M0.5 0.5h8.3v6h1.2v5.3h-9.5z" fill="#fce395" stroke="#f3d675" stroke-width="0.8"/><path d="M8.8 6.5v5.3" stroke="#f0d26c" stroke-width="0.6"/></svg>
<div class="t" style="left:556px;top:286.0px">Monk</div>
<svg class="a" style="left:542px;top:299.5px" width="11" height="13" viewBox="0 0 11 13"><path d="M0.5 0.5h8.3v6h1.2v5.3h-9.5z" fill="#fce395" stroke="#f3d675" stroke-width="0.8"/><path d="M8.8 6.5v5.3" stroke="#f0d26c" stroke-width="0.6"/></svg>
<div class="t" style="left:556px;top:301.5px">My Own Worst Enemy</div>
<svg class="a" style="left:542px;top:315.5px" width="11" height="13" viewBox="0 0 11 13"><path d="M0.5 0.5h8.3v6h1.2v5.3h-9.5z" fill="#fce395" stroke="#f3d675" stroke-width="0.8"/><path d="M8.8 6.5v5.3" stroke="#f0d26c" stroke-width="0.6"/></svg>
<div class="t" style="left:556px;top:317.0px">Stargate Universe</div>
<svg class="a" style="left:542px;top:331.5px" width="11" height="13" viewBox="0 0 11 13"><path d="M0.5 0.5h8.3v6h1.2v5.3h-9.5z" fill="#fce395" stroke="#f3d675" stroke-width="0.8"/><path d="M8.8 6.5v5.3" stroke="#f0d26c" stroke-width="0.6"/></svg>
<div class="t" style="left:556px;top:332.5px">The Colbert Report</div>
<svg class="a" style="left:542px;top:346.5px" width="11" height="13" viewBox="0 0 11 13"><path d="M0.5 0.5h8.3v6h1.2v5.3h-9.5z" fill="#fce395" stroke="#f3d675" stroke-width="0.8"/><path d="M8.8 6.5v5.3" stroke="#f0d26c" stroke-width="0.6"/></svg>
<div class="t" style="left:556px;top:348.0px">The Suite Life of Zack &amp; Cody</div>
<!-- hscroll + status -->
<div class="a" style="left:525px;top:457px;width:391px;height:11px;background:#f0f0f0"></div>
<svg class="a" style="left:530px;top:459px" width="6" height="8"><path d="M4.5 0.5l-3.5 3.5 3.5 3.5" fill="none" stroke="#555" stroke-width="1.1"/></svg>
<div class="a" style="left:540px;top:457px;width:256px;height:11px;background:#cdcdcd"></div>
<svg class="a" style="left:907px;top:459px" width="6" height="8"><path d="M1 0.5l3.5 3.5-3.5 3.5" fill="none" stroke="#555" stroke-width="1.1"/></svg>
<div class="a" style="left:880px;top:468px;width:17px;height:18px;background:#cce8ff;border:1px solid #99d1ff"></div>
<svg class="a" style="left:883px;top:471px" width="12" height="12" viewBox="0 0 12 12"><rect x="0.5" y="0.5" width="3" height="3" fill="#fff" stroke="#999" stroke-width="0.6"/><rect x="0.5" y="4.5" width="3" height="3" fill="#fff" stroke="#999" stroke-width="0.6"/><rect x="0.5" y="8.5" width="3" height="3" fill="#f3d9a0" stroke="#999" stroke-width="0.6"/><path d="M5 2h2.5M9 2h2.5M5 6h2.5M9 6h2.5M5 10h2.5M9 10h2.5" stroke="#777" stroke-width="1"/></svg>
<svg class="a" style="left:899px;top:472px" width="11" height="10" viewBox="0 0 11 10"><rect x="0.5" y="0.5" width="10" height="8.5" fill="#f4f4f4" stroke="#999" stroke-width="0.7"/><rect x="2" y="2" width="7" height="5.5" fill="#2f6db3"/><path d="M2 5.5l3-1.5 4 1v2.5h-7z" fill="#cfe3f5"/></svg>

<!-- ===== PowerShell ===== -->
<div class="a" style="left:1px;top:46px;width:447px;height:269px;background:#012456;background-clip:padding-box;border:1px solid rgba(40,40,40,.35);box-shadow:1px 2px 6px rgba(0,0,0,.3)"></div>
<div class="a" style="left:2px;top:47px;width:445px;height:22px;background:#fff"></div>
<svg class="a" style="left:8px;top:52px" width="13" height="10" viewBox="0 0 13 10"><path d="M2.5 0.5h10l-2 9h-10z" fill="#2f7bd6"/><path d="M3.5 2.5l3 2.2-3.5 2.3" fill="none" stroke="#fff" stroke-width="1.1"/><path d="M6 7.5h3" stroke="#fff" stroke-width="1"/></svg>
<div class="t" style="left:23px;top:53px;color:#9a9a9a;font-size:8.8px">Windows PowerShell</div>
<div class="a" style="left:358px;top:57px;width:8px;height:1px;background:#aaa"></div>
<div class="a" style="left:392px;top:53px;width:8px;height:8px;border:1px solid #aaa"></div>
<svg class="a" style="left:425px;top:52px" width="10" height="10"><path d="M1 1l8 8M9 1l-8 8" stroke="#aaa" stroke-width="1"/></svg>
<div class="a" style="left:434px;top:69px;width:13px;height:245px;background:#f0f0f0"></div>
<svg class="a" style="left:436px;top:73px" width="8" height="6"><path d="M1 4.5l3-3 3 3" fill="none" stroke="#505050" stroke-width="1.3"/></svg>
<div class="a" style="left:435px;top:82px;width:11px;height:12px;background:#cdcdcd"></div>
<div class="t mono" style="left:1.8px;top:70px;font-size:11.1px;letter-spacing:0.78px;line-height:13px;color:#e4e4ea">PS E:\Music\TV Shows\Heroes&gt; <span style="color:#ece8c4">dir</span> <span style="color:#9096a4">-n</span> &gt; filelist.txt</div>

<!-- ===== Command Prompt ===== -->
<div class="a" style="left:70px;top:199px;width:454px;height:303px;background:#0c0c0c;background-clip:padding-box;border:1px solid rgba(50,50,50,.6);box-shadow:3px 2px 12px rgba(0,0,0,.35)"></div>
<div class="a" style="left:71px;top:200px;width:452px;height:21px;background:#fff"></div>
<svg class="a" style="left:77px;top:205px" width="12" height="10" viewBox="0 0 12 10"><rect x="0.5" y="0.5" width="11" height="9" fill="#050505" stroke="#8a8a8a" stroke-width="0.9"/><rect x="1" y="1" width="10" height="1.3" fill="#d8d8d8"/><path d="M3.5 4.3a1.3 1.3 0 1 0 0 2.6M5 4.5v0.3M5 6.5v0.3M6.5 4l1.5 3" fill="none" stroke="#e8e8e8" stroke-width="0.9"/><path d="M9 7.5h1.5" stroke="#ccc" stroke-width="0.8"/></svg>
<div class="t" style="left:93px;top:205px;color:#111;font-size:8.8px">Command Prompt</div>
<div class="a" style="left:435px;top:210px;width:8px;height:1px;background:#222"></div>
<div class="a" style="left:468px;top:206px;width:8px;height:8px;border:1px solid #222"></div>
<svg class="a" style="left:501px;top:205px" width="10" height="10"><path d="M1 1l8 8M9 1l-8 8" stroke="#222" stroke-width="1"/></svg>
<div class="a" style="left:510px;top:221px;width:13px;height:280px;background:#f0f0f0"></div>
<svg class="a" style="left:513px;top:225px" width="8" height="6"><path d="M1 4.5l3-3 3 3" fill="none" stroke="#505050" stroke-width="1.3"/></svg>
<div class="a" style="left:511px;top:234px;width:11px;height:12px;background:#cdcdcd"></div>
<svg class="a" style="left:513px;top:492px" width="8" height="6"><path d="M1 1.5l3 3 3-3" fill="none" stroke="#505050" stroke-width="1.3"/></svg>
<pre class="a mono" style="left:71px;top:222.5px;font-size:9.85px;line-height:11.88px;color:#c4c4c4">Microsoft Windows [Version 10.0.19045.4239]
(c) Microsoft Corporation. All rights reserved.

C:\Users\     &gt;E:

E:\&gt;cd Music

E:\Music&gt;cd TV Shows

E:\Music\TV Shows&gt;cd Heroes

E:\Music\TV Shows\Heroes&gt;dir /b &gt; filelist.txt</pre>
<div class="a" style="left:124.0px;top:255.3px;width:7.4px;height:7.3px;background:#2f2b23"></div><div class="a" style="left:131.4px;top:255.3px;width:7.4px;height:7.3px;background:#383e48"></div><div class="a" style="left:138.8px;top:255.3px;width:7.4px;height:7.3px;background:#3b3d42"></div><div class="a" style="left:146.2px;top:255.3px;width:7.4px;height:7.3px;background:#4a4536"></div><div class="a" style="left:124.0px;top:262.5px;width:7.4px;height:7.3px;background:#2c2a25"></div><div class="a" style="left:131.4px;top:262.5px;width:7.4px;height:7.3px;background:#5a5e66"></div><div class="a" style="left:138.8px;top:262.5px;width:7.4px;height:7.3px;background:#1f2125"></div><div class="a" style="left:146.2px;top:262.5px;width:7.4px;height:7.3px;background:#3d3b31"></div>

</body></html>
